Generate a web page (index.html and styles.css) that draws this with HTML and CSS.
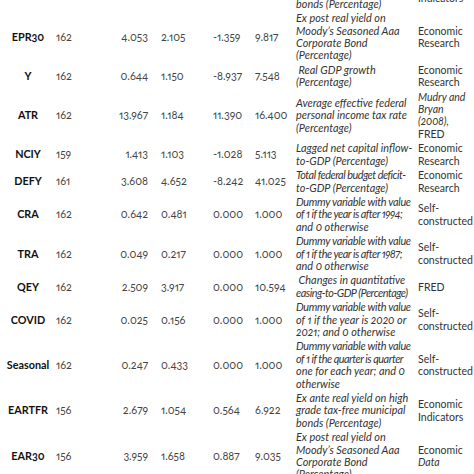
FILE: index.html
```html
<!DOCTYPE html>
<html>
<head>
<meta charset="utf-8">
<link rel="stylesheet" href="styles.css">
</head>
<body>
<div class="table">
  <div class="row">
    <div class="var">EARTFR</div><div class="n">156</div><div class="mean">2.679</div><div class="sd">1.054</div><div class="min">0.564</div><div class="max">6.922</div>
    <div class="desc">Ex ante real yield on high<br>grade tax-free municipal<br>bonds (Percentage)</div>
    <div class="src">Economic<br>Indicators</div>
  </div>
  <div class="row">
    <div class="var">EPR30</div><div class="n">162</div><div class="mean">4.053</div><div class="sd">2.105</div><div class="min">-1.359</div><div class="max">9.817</div>
    <div class="desc">Ex post real yield on<br>Moody’s Seasoned Aaa<br>Corporate Bond<br>(Percentage)</div>
    <div class="src">Economic<br>Research</div>
  </div>
  <div class="row">
    <div class="var">Y</div><div class="n">162</div><div class="mean">0.644</div><div class="sd">1.150</div><div class="min">-8.937</div><div class="max">7.548</div>
    <div class="desc">&nbsp;Real GDP growth<br>(Percentage)</div>
    <div class="src">Economic<br>Research</div>
  </div>
  <div class="row">
    <div class="var">ATR</div><div class="n">162</div><div class="mean">13.967</div><div class="sd">1.184</div><div class="min">11.390</div><div class="max">16.400</div>
    <div class="desc">Average effective federal<br>personal income tax rate<br>(Percentage)</div>
    <div class="src"><i>Mudry and<br>Bryan<br>(2008),</i><br>FRED</div>
  </div>
  <div class="row">
    <div class="var">NCIY</div><div class="n">159</div><div class="mean">1.413</div><div class="sd">1.103</div><div class="min">-1.028</div><div class="max">5.113</div>
    <div class="desc">Lagged net capital inflow-<br>to-GDP (Percentage)</div>
    <div class="src">Economic<br>Research</div>
  </div>
  <div class="row">
    <div class="var">DEFY</div><div class="n">161</div><div class="mean">3.608</div><div class="sd">4.652</div><div class="min">-8.242</div><div class="max">41.025</div>
    <div class="desc"><span class="tight">Total federal budget deficit-</span><br>to-GDP (Percentage)</div>
    <div class="src">Economic<br>Research</div>
  </div>
  <div class="row">
    <div class="var">CRA</div><div class="n">162</div><div class="mean">0.642</div><div class="sd">0.481</div><div class="min">0.000</div><div class="max">1.000</div>
    <div class="desc"><span class="snug">Dummy variable with value</span><br><span class="tight">of 1 if the year is after 1994;</span><br>and 0 otherwise</div>
    <div class="src">Self-<br>constructed</div>
  </div>
  <div class="row">
    <div class="var">TRA</div><div class="n">162</div><div class="mean">0.049</div><div class="sd">0.217</div><div class="min">0.000</div><div class="max">1.000</div>
    <div class="desc"><span class="snug">Dummy variable with value</span><br><span class="tight">of 1 if the year is after 1987;</span><br>and 0 otherwise</div>
    <div class="src">Self-<br>constructed</div>
  </div>
  <div class="row">
    <div class="var">QEY</div><div class="n">162</div><div class="mean">2.509</div><div class="sd">3.917</div><div class="min">0.000</div><div class="max">10.594</div>
    <div class="desc">&nbsp;Changes in quantitative<br><span class="tight">easing-to-GDP (Percentage)</span></div>
    <div class="src">FRED</div>
  </div>
  <div class="row">
    <div class="var">COVID</div><div class="n">162</div><div class="mean">0.025</div><div class="sd">0.156</div><div class="min">0.000</div><div class="max">1.000</div>
    <div class="desc"><span class="snug">Dummy variable with value</span><br>of 1 if the year is 2020 or<br>2021; and 0 otherwise</div>
    <div class="src">Self-<br>constructed</div>
  </div>
  <div class="row">
    <div class="var">Seasonal</div><div class="n">162</div><div class="mean">0.247</div><div class="sd">0.433</div><div class="min">0.000</div><div class="max">1.000</div>
    <div class="desc"><span class="snug">Dummy variable with value</span><br><span class="tight">of 1 if the quarter is quarter</span><br>one for each year; and 0<br>otherwise</div>
    <div class="src">Self-<br>constructed</div>
  </div>
  <div class="row">
    <div class="var">EARTFR</div><div class="n">156</div><div class="mean">2.679</div><div class="sd">1.054</div><div class="min">0.564</div><div class="max">6.922</div>
    <div class="desc">Ex ante real yield on high<br>grade tax-free municipal<br>bonds (Percentage)</div>
    <div class="src">Economic<br>Indicators</div>
  </div>
  <div class="row">
    <div class="var">EAR30</div><div class="n">156</div><div class="mean">3.959</div><div class="sd">1.658</div><div class="min">0.887</div><div class="max">9.035</div>
    <div class="desc">Ex post real yield on<br>Moody’s Seasoned Aaa<br>Corporate Bond<br>(Percentage)</div>
    <div class="src">Economic<br><i>Data</i></div>
  </div>
</div>
</body>
</html>
```

FILE: styles.css
```css
html, body {
  margin: 0;
  padding: 0;
  background: #fff;
  overflow: hidden;
}
body {
  width: 474px;
  height: 474px;
  font-family: Lato, "Open Sans", sans-serif;
  font-size: 10.8px;
  line-height: 12.4px;
  color: #333;
  font-variant-numeric: oldstyle-nums proportional-nums;
}
.table {
  margin-top: -28px;
}
.row {
  display: grid;
  grid-template-columns: 56px 54px 51px 52px 42px 41px 122px 56px;
  align-items: center;
  padding: 1px 0;
  white-space: nowrap;
}
.var {
  text-align: center;
  font-weight: 700;
  font-size: 10.8px;
  color: #111;
}
.n, .mean, .sd, .min, .max {
  color: #444;
}
.mean {
  text-align: right;
  padding-right: 13px;
}
.desc {
  font-style: italic;
  font-size: 10.9px;
  color: #333;
}
.tight {
  letter-spacing: -0.5px;
}
.snug {
  letter-spacing: -0.3px;
}
.src {
  font-style: normal;
  font-size: 10.5px;
  color: #333;
}
```
